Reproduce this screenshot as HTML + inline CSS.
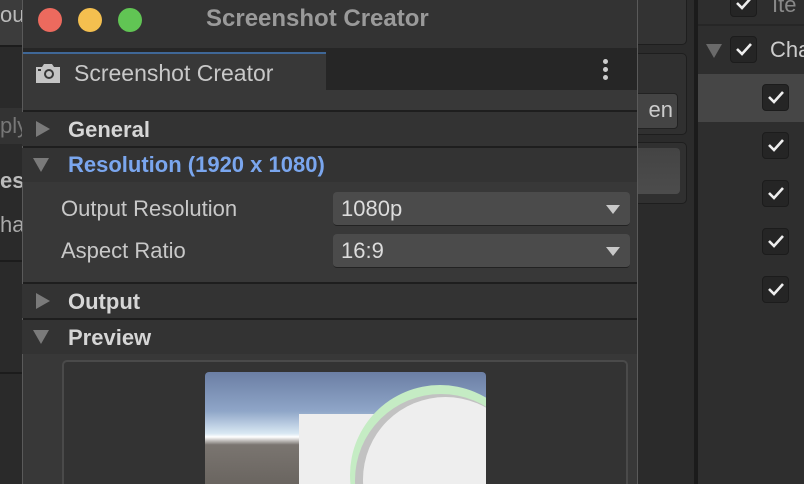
<!DOCTYPE html>
<html style="width:804px;height:484px;overflow:hidden"><head><style>
*{margin:0;padding:0;box-sizing:border-box}
body{width:804px;height:484px;overflow:hidden;background:#2a2a2a;font-family:"Liberation Sans",sans-serif;position:relative}
.a{position:absolute}
.cb{position:absolute;width:27px;height:27px;background:#252525;border:1px solid #1c1c1c;border-radius:4px}
.cb svg{position:absolute;left:4px;top:5px}
.row{position:absolute;left:22px;width:615px;font-size:22px;color:#d6d6d6;font-weight:bold}
.tri{position:absolute;left:14px;width:0;height:0}
.tr{border-top:8px solid transparent;border-bottom:8px solid transparent;border-left:14px solid #7a7a7a}
.td{border-left:8px solid transparent;border-right:8px solid transparent;border-top:14px solid #7a7a7a}
.dd{position:absolute;left:333px;width:297px;height:34px;background:#4b4b4b;border-radius:4px;border-bottom:1px solid #222;color:#dcdcdc;font-size:22px;padding:4px 8px}
.dd:after{content:"";position:absolute;right:10px;top:13px;border-left:7px solid transparent;border-right:7px solid transparent;border-top:9px solid #c8c8c8}
.lbl{position:absolute;left:61px;font-size:22px;color:#c8c8c8}
</style></head><body>
<div class="a" style="left:0;top:0;width:30px;height:45px;background:#3c3c3c"></div>
<div class="a" style="left:0;top:2px;font-size:22px;color:#bbb">ou</div>
<div class="a" style="left:0;top:45px;width:30px;height:2px;background:#1c1c1c"></div>
<div class="a" style="left:0;top:108px;width:30px;height:36px;background:#333"></div>
<div class="a" style="left:0;top:113px;font-size:22px;color:#777">ply</div>
<div class="a" style="left:0;top:168px;font-size:22px;color:#bbb;font-weight:bold">es</div>
<div class="a" style="left:0;top:212px;font-size:22px;color:#aaa">ha</div>
<div class="a" style="left:0;top:260px;width:30px;height:2px;background:#1c1c1c"></div>
<div class="a" style="left:0;top:372px;width:30px;height:2px;background:#1c1c1c"></div>
<div class="a" style="left:630px;top:0;width:64px;height:484px;background:#2b2b2b"></div>
<div class="a" style="left:620px;top:-5px;width:67px;height:50px;border:1px solid #1e1e1e;border-radius:5px;background:#333"></div>
<div class="a" style="left:620px;top:53px;width:67px;height:82px;border:1px solid #1e1e1e;border-radius:5px;background:#303030"></div>
<div class="a" style="left:620px;top:93px;width:58px;height:36px;border-radius:4px;background:#444;border:1px solid #222;color:#ccc;font-size:22px;padding:3px 4px 0 10px;text-align:right">en</div>
<div class="a" style="left:620px;top:142px;width:67px;height:62px;border:1px solid #1e1e1e;border-radius:5px;background:#303030"></div>
<div class="a" style="left:620px;top:148px;width:60px;height:46px;border-radius:4px;background:linear-gradient(#444,#4c4c4c)"></div>
<div class="a" style="left:694px;top:0;width:4px;height:484px;background:#1b1b1b"></div>
<div class="a" style="left:698px;top:0;width:106px;height:484px;background:#2e2e2e"></div>
<div class="a" style="left:698px;top:24px;width:106px;height:2px;background:#262626"></div>
<div class="a" style="left:698px;top:74px;width:106px;height:48px;background:#464646"></div>
<div class="a" style="left:772px;top:-8px;font-size:22px;color:#888">Ite</div>
<div class="a" style="left:706px;top:44px;border-left:8px solid transparent;border-right:8px solid transparent;border-top:14px solid #6a6a6a"></div>
<div class="a" style="left:770px;top:37px;font-size:22px;color:#ccc">Cha</div>
<div class="cb" style="left:730px;top:-10px"><svg width="18" height="14"><path d="M2 7 L7 12 L16 2" stroke="#eee" stroke-width="2.6" fill="none"/></svg></div>
<div class="cb" style="left:730px;top:36px"><svg width="18" height="14"><path d="M2 7 L7 12 L16 2" stroke="#eee" stroke-width="2.6" fill="none"/></svg></div>
<div class="cb" style="left:762px;top:84px"><svg width="18" height="14"><path d="M2 7 L7 12 L16 2" stroke="#eee" stroke-width="2.6" fill="none"/></svg></div>
<div class="cb" style="left:762px;top:132px"><svg width="18" height="14"><path d="M2 7 L7 12 L16 2" stroke="#eee" stroke-width="2.6" fill="none"/></svg></div>
<div class="cb" style="left:762px;top:180px"><svg width="18" height="14"><path d="M2 7 L7 12 L16 2" stroke="#eee" stroke-width="2.6" fill="none"/></svg></div>
<div class="cb" style="left:762px;top:228px"><svg width="18" height="14"><path d="M2 7 L7 12 L16 2" stroke="#eee" stroke-width="2.6" fill="none"/></svg></div>
<div class="cb" style="left:762px;top:276px"><svg width="18" height="14"><path d="M2 7 L7 12 L16 2" stroke="#eee" stroke-width="2.6" fill="none"/></svg></div>
<div class="a" style="left:22px;top:-12px;width:616px;height:496px;background:#383838;border:1px solid #5a5a5a;border-bottom:none;border-radius:12px 12px 0 0;overflow:hidden">
 <div class="a" style="left:0;top:0;width:616px;height:60px;background:#333"></div>
</div>
<div class="a" style="left:38px;top:8px;width:24px;height:24px;border-radius:50%;background:#ec6a5e"></div>
<div class="a" style="left:78px;top:8px;width:24px;height:24px;border-radius:50%;background:#f4bf4f"></div>
<div class="a" style="left:118px;top:8px;width:24px;height:24px;border-radius:50%;background:#61c554"></div>
<div class="a" style="left:206px;top:5px;font-size:24px;font-weight:bold;color:#9a9a9a">Screenshot Creator</div>
<div class="a" style="left:23px;top:48px;width:614px;height:42px;background:#262626"></div>
<div class="a" style="left:23px;top:52px;width:303px;height:38px;background:#383838;border-top:2px solid #3f6797"></div>
<svg class="a" style="left:34px;top:61px" width="28" height="24"><path d="M2 6 h6 l2-3 h8 l2 3 h6 v16 h-24z" fill="#c4c4c4"/><circle cx="15" cy="13" r="5" fill="#383838"/><circle cx="15" cy="13" r="3" fill="#c4c4c4"/><rect x="4" y="8" width="3" height="2" fill="#383838"/></svg>
<div class="a" style="left:74px;top:60px;font-size:23px;color:#c8c8c8">Screenshot Creator</div>
<div class="a" style="left:603px;top:59px;width:5px;height:5px;border-radius:50%;background:#ccc;box-shadow:0 8px 0 #ccc,0 16px 0 #ccc"></div>
<div class="a" style="left:23px;top:110px;width:614px;height:2px;background:#1e1e1e"></div>
<div class="row" style="top:112px;height:34px;background:#333"><div class="tri tr" style="top:9px"></div><span class="a" style="left:46px;top:5px">General</span></div>
<div class="a" style="left:23px;top:146px;width:614px;height:2px;background:#1e1e1e"></div>
<div class="row" style="top:148px;height:34px;background:#333;color:#7aa6ee"><div class="tri td" style="top:10px;left:11px"></div><span class="a" style="left:46px;top:4px">Resolution (1920 x 1080)</span></div>
<div class="lbl" style="top:196px">Output Resolution</div>
<div class="dd" style="top:192px">1080p</div>
<div class="lbl" style="top:238px">Aspect Ratio</div>
<div class="dd" style="top:234px">16:9</div>
<div class="a" style="left:23px;top:282px;width:614px;height:2px;background:#1e1e1e"></div>
<div class="row" style="top:284px;height:34px;background:#333"><div class="tri tr" style="top:9px"></div><span class="a" style="left:46px;top:5px">Output</span></div>
<div class="a" style="left:23px;top:318px;width:614px;height:2px;background:#1e1e1e"></div>
<div class="row" style="top:320px;height:34px;background:#333"><div class="tri td" style="top:10px;left:11px"></div><span class="a" style="left:46px;top:5px">Preview</span></div>
<div class="a" style="left:62px;top:360px;width:566px;height:124px;border:2px solid #4a4a4a;border-bottom:none;border-radius:5px 5px 0 0;background:#333"></div>
<div class="a" style="left:205px;top:372px;width:281px;height:112px;border-radius:4px 4px 0 0;overflow:hidden;background:linear-gradient(#6b7ea4 0%,#8fa6c8 35%,#d9e8f3 55%,#fff 58%,#7a7570 65%,#6a6560 100%)">
 <div class="a" style="left:94px;top:42px;width:80px;height:90px;background:#eeeeee"></div>
 <div class="a" style="left:145px;top:13px;width:180px;height:180px;border-radius:50%;background:#c5ecc4"></div>
 <div class="a" style="left:150px;top:22px;width:172px;height:172px;border-radius:50%;background:#c2c2c2"></div>
 <div class="a" style="left:158px;top:25px;width:165px;height:165px;border-radius:50%;background:#eeeeee"></div>
</div>
</body></html>
